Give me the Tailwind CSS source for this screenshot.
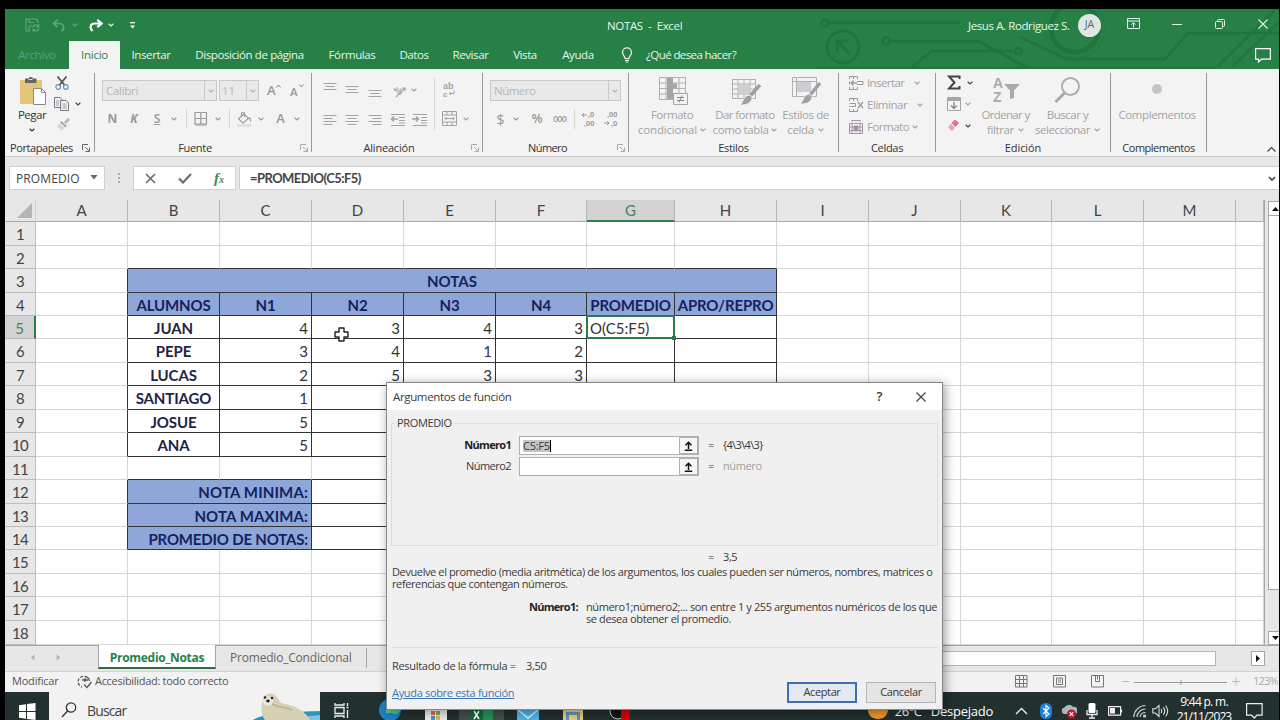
<!DOCTYPE html>
<html lang="es">
  <head>
    <meta charset="UTF-8" />
    <meta name="viewport" content="width=device-width, initial-scale=1.0" />
    <title>NOTAS - Excel</title>
    <script src="https://cdn.jsdelivr.net/npm/@tailwindcss/browser@4"></script>
  </head>
  <body class="relative h-[720px] w-[1280px] overflow-hidden bg-black pt-[9px] pr-px pl-[5px] font-['Open_Sans',sans-serif] text-[11px] text-[#333]">
    <svg class="hidden">
      <symbol id="chev" viewBox="0 0 6 4"><path d="M.6 .8 3 3 5.400 .8" fill="none" stroke="currentColor" stroke-width="1.200" /></symbol>
      <symbol id="launch" viewBox="0 0 8 8"><path d="M.5 6V.5H6M3 3l4 4M7.500 3.500v4h-4" fill="none" stroke="currentColor" /></symbol>
      <symbol id="upload" viewBox="0 0 9 10"><path d="M4.500 8V2M1.500 4.300 4.500 1.300l3 3M.8 9.300h7.400" fill="none" stroke="#111" stroke-width="1.500" /></symbol>
    </svg>

    <div class="flex h-[711px] flex-col">
      <!-- Title bar and tabs -->
      <header class="relative h-[60px] shrink-0 overflow-hidden bg-[#278147] text-[#e4f5ea]">
        <svg class="absolute top-0 right-0" width="464" height="60" viewBox="815 9 464 60" fill="none" stroke="#21743f" stroke-width="2.500">
          <circle cx="825" cy="23" r="3.500" />
          <path d="M829 23H960M890 41H978L1030 69M912 67 932 51H1013M1020 37 1066 59H1165L1188 33H1279M1217 67 1275 10M1232 67 1279 22M812 67l6 1H1216" />
          <circle cx="843" cy="47" r="16" stroke-width="3" />
          <path d="M837 52V41H848M837 41 850 54" stroke-width="3" />
          <circle cx="886" cy="41" r="3.500" />
          <circle cx="1018" cy="51" r="3" />
          <circle cx="1075" cy="28" r="30" stroke-width="1.500" stroke="#247b43" />
          <circle cx="1075" cy="28" r="24" stroke-width="5" />
        </svg>
        <div class="relative flex h-8 items-center">
          <svg class="ml-[20px] text-[#5fa57a]" width="15" height="14" viewBox="0 0 15 14" fill="none" stroke="currentColor" stroke-width="1.200"><path d="M5 13H1V1h10l2 2v2M4 1v3.500h5M4 13V8h3" /><path d="M7.500 9.500a3.200 3.200 0 0 1 6-1M13.700 6v2.700H11M14 10.500a3.200 3.200 0 0 1-5.700 1.200M8 13.500v-2h2" /></svg>
          <svg class="ml-[12px] text-[#5fa57a]" width="14" height="13" viewBox="0 0 14 13" fill="none" stroke="currentColor" stroke-width="1.700"><path d="M5.500 1 1.500 4.500l4 3.500M2 4.500h6a4 4 0 0 1 1.500 7.500" /></svg>
          <svg class="ml-[6px] text-[#5fa57a]" width="6" height="4"><use href="#chev" /></svg>
          <svg class="ml-[11px] text-white" width="14" height="13" viewBox="0 0 14 13" fill="none" stroke="currentColor" stroke-width="2.200"><path d="M8.300 .8l4.200 3.700-4.200 3.700M12.500 4.500H5.500C1 4.500 .5 9.500 3.500 12" /></svg>
          <svg class="ml-[5px]" width="6" height="4"><use href="#chev" /></svg>
          <svg class="ml-[15px] text-white" width="7" height="7" viewBox="0 0 7 7"><path d="M1 .7h5" stroke="currentColor" stroke-width="1.300" /><path d="M1 3.500h5L3.500 6.500z" fill="currentColor" /></svg>
          <span class="mt-px ml-[471px] w-[80px] text-[11.5px] tracking-[-0.35px] whitespace-pre">NOTAS  -  Excel</span>
          <span class="mt-px ml-[281px] w-[103px] text-[11.5px] tracking-[-0.4px] whitespace-nowrap">Jesus A. Rodriguez S.</span>
          <span class="ml-[7px] flex size-[23px] items-center justify-center rounded-full bg-[#dfe6e3] text-[10.5px] text-[#5d6b6b]">JA</span>
          <svg class="mb-[3px] ml-[26px]" width="13" height="11" viewBox="0 0 13 11" fill="none" stroke="currentColor"><path d="M.5 .5h12v10H.5zM.5 3h12M6.500 9.500V5M4.500 6.700l2-2 2 2" /></svg>
          <svg class="mb-[3px] ml-[32px]" width="10" height="10" viewBox="0 0 10 10"><path d="M0 5.500h10" stroke="currentColor" /></svg>
          <svg class="mb-[3px] ml-[33px]" width="10" height="10" viewBox="0 0 10 10" fill="none" stroke="currentColor"><rect x=".5" y="2.500" width="7" height="7" rx="1" /><path d="M2.500 2.500V1.500a1 1 0 0 1 1-1h5a1 1 0 0 1 1 1v5a1 1 0 0 1-1 1h-1" /></svg>
          <svg class="mb-[3px] ml-[33px]" width="10" height="10" viewBox="0 0 10 10"><path d="M.5 .5l9 9M9.500 .5l-9 9" stroke="currentColor" stroke-width="1.100" /></svg>
        </div>
        <nav class="relative flex h-7 items-center text-center text-[11.5px] font-medium tracking-[-0.4px] whitespace-nowrap">
          <span class="w-[64px] text-[#5aa276]">Archivo</span>
          <span class="flex h-7 w-[51px] items-center justify-center bg-[#f3f3f3] tracking-[-0.25px] text-[#2a7f49]">Inicio</span>
          <span class="w-[62px]">Insertar</span>
          <span class="w-[135px]">Disposición de página</span>
          <span class="w-[70px]">Fórmulas</span>
          <span class="w-[54px]">Datos</span>
          <span class="w-[59px]">Revisar</span>
          <span class="w-[50px]">Vista</span>
          <span class="w-[56px]">Ayuda</span>
          <svg class="ml-[15px]" width="12" height="16" viewBox="0 0 12 16" fill="none" stroke="currentColor" stroke-width="1.200"><path d="M4 11.500C4 9 1.500 8.500 1.500 5.300a4.500 4.500 0 0 1 9 0C10.500 8.500 8 9 8 11.500zM4 13.300h4M4.700 15h2.600" /></svg>
          <span class="ml-[13px] tracking-[-0.6px]">¿Qué desea hacer?</span>
          <svg class="mr-[8px] ml-auto" width="16" height="15" viewBox="0 0 16 15" fill="none" stroke="#fff" stroke-width="1.200"><path d="M.6 .6h14.800v10.500H6.500L3.500 14v-2.900H.6z" /></svg>
        </nav>
      </header>

      <!-- Ribbon -->
      <section class="flex h-[88px] shrink-0 border-b border-[#cfcfcf] bg-[#f3f3f3] text-[#a3a3a3]">
        <div class="flex w-[89px] flex-col">
          <div class="flex h-[71px]">
            <div class="flex w-[54px] flex-col items-center pt-2 text-[#333]">
              <svg class="ml-[1px]" width="28" height="29" viewBox="0 0 28 29"><path d="M1 3h22v24H1z" fill="#e5c679" /><path d="M6 1.500h3.500a2.500 2.500 0 0 1 4.500 0h3.500V6h-11.500z" fill="#666" /><path d="M9.500 2.500h4" stroke="#ddd" /><path d="M14.500 11.500h8l4 4v12h-12z" fill="#fff" stroke="#8a8a8a" /><path d="M22.500 11.500v4h4" fill="none" stroke="#8a8a8a" /></svg>
              <span class="mt-px h-[16px] text-[11.5px] leading-[16px] tracking-[-0.5px]">Pegar</span>
              <svg class="mt-[5px]" width="6" height="4"><use href="#chev" /></svg>
            </div>
            <div class="flex w-[35px] flex-col pt-[7px]">
              <svg class="-ml-[4px]" width="14" height="14" viewBox="0 0 14 14" fill="none"><path d="M2.500 .5 9.500 9M11.500 .5 4.500 9" stroke="#555" stroke-width="1.800" /><circle cx="3.200" cy="11" r="2.300" stroke="#6b8fb0" stroke-width="1.200" /><circle cx="10.800" cy="11" r="2.300" stroke="#6b8fb0" stroke-width="1.200" /></svg>
              <div class="mt-[7px] -ml-[5px] flex items-center text-[#444]">
                <svg width="15" height="14" viewBox="0 0 15 14" fill="#f3f3f3" stroke="#777"><path d="M.5 .5h5.500l2 2v8H.5z" /><path d="M2 4h3M2 6h3M2 8h3" stroke="#8aa3ba" /><path d="M6.500 3.500H12l2.500 2.500v7.500h-8z" /><path d="M8.500 7h4M8.500 9h4M8.500 11h4" stroke="#8aa3ba" /></svg>
                <svg class="ml-[6px]" width="6" height="4"><use href="#chev" /></svg>
              </div>
              <svg class="mt-[7px] -ml-[3px]" width="14" height="13" viewBox="0 0 14 13"><path d="M13 1 9 5" stroke="#b9b9b9" stroke-width="3" /><path d="m5.500 3 5.500 5-1.500 1.500-5.500-5z" fill="#aaa" /><path d="M4 5.500 8.500 10 6 12.500.5 8.500z" fill="#d5d5d5" /></svg>
            </div>
          </div>
          <div class="flex h-[16px] items-center justify-between pr-[4px] pl-[5px] tracking-[-0.4px] text-[#333]">Portapapeles<svg width="8" height="8" class="text-[#666]"><use href="#launch" /></svg></div>
        </div>
        <div class="mt-1 h-[79px] w-px bg-[#999]"></div>

        <div class="flex w-[216px] flex-col">
          <div class="h-[71px] pt-[11px]">
            <div class="flex h-[21px] items-center pl-[7px] text-[11.5px]">
              <div class="flex h-[21px] w-[115px] items-center border border-[#c9c9c9] bg-[#e9e9e9] pl-[3px] tracking-[-0.3px] text-[#b5b5b5]">Calibri<span class="ml-auto flex h-full w-[12px] items-center justify-center border-l border-[#c9c9c9]"><svg width="6" height="4"><use href="#chev" /></svg></span></div>
              <div class="ml-[2px] flex h-[21px] w-[40px] items-center border border-[#c9c9c9] bg-[#e9e9e9] pl-[2px] text-[#b5b5b5]">11<span class="ml-auto flex h-full w-[12px] items-center justify-center border-l border-[#c9c9c9]"><svg width="6" height="4"><use href="#chev" /></svg></span></div>
              <span class="ml-[8px] w-[8px] text-[13px] font-semibold text-[#999]">A</span><svg class="mb-[9px] ml-px" width="5" height="4"><path d="M.5 3.500 2.500 1l2 2.500" fill="none" stroke="#888" /></svg>
              <span class="mt-[2px] ml-[9px] w-[8px] text-[11.5px] font-semibold text-[#999]">A</span><svg class="mb-[9px] ml-px" width="5" height="4"><path d="M.5 .5 2.500 3l2-2.500" fill="none" stroke="#888" /></svg>
            </div>
            <div class="mt-[8px] flex h-[20px] items-center pl-[7px] text-center text-[12px] text-[#999]">
              <span class="w-[21px] font-bold">N</span>
              <span class="w-[22px] font-bold italic">K</span>
              <span class="w-[24px] font-semibold underline">S</span>
              <svg class="mx-[2px]" width="6" height="4"><use href="#chev" /></svg>
              <span class="ml-[7px] h-[20px] w-px bg-[#d5d5d5]"></span>
              <svg class="ml-[7px]" width="14" height="14" viewBox="0 0 14 14" fill="none" stroke="currentColor"><path d="M1 .5h11.500V12H1zM1 6.500h11.500M6.800 .5V12" stroke-width="1.200" /><path d="M1 13h11.500" /></svg>
              <svg class="ml-[7px]" width="6" height="4"><use href="#chev" /></svg>
              <span class="ml-[8px] h-[20px] w-px bg-[#d5d5d5]"></span>
              <svg class="ml-[7px]" width="15" height="15" viewBox="0 0 15 15" fill="none" stroke="currentColor" stroke-width="1.100"><path d="M1.500 7 7 1.800 11.500 6.500 6 11zM4.500 4V1.500a1.500 1.500 0 0 1 3 0V5M12 5.500c1.500 1 1.800 2.500 1.300 4" /><path d="M0 13.500h14" stroke="#ddd" stroke-width="2.500" /></svg>
              <svg class="ml-[6px]" width="6" height="4"><use href="#chev" /></svg>
              <span class="ml-[4px] w-[25px] text-[13px] font-semibold">A</span>
              <svg class="ml-[1px]" width="6" height="4"><use href="#chev" /></svg>
            </div>
          </div>
          <div class="relative flex h-[16px] items-center justify-center pr-[16px] tracking-[-0.3px] text-[#333]">Fuente<svg width="8" height="8" class="absolute right-[3px] text-[#aaa]"><use href="#launch" /></svg></div>
        </div>
        <div class="mt-1 h-[79px] w-px bg-[#999]"></div>

        <div class="flex w-[170px] flex-col">
          <div class="flex h-[71px] pt-[9px]">
            <div class="w-[122px] pl-[11px]">
              <div class="flex h-[24px] items-center">
                <svg class="mb-[7px]" width="14" height="8" viewBox="0 0 14 8" stroke="currentColor"><path d="M.5 .5h13M2.500 3.500h9M.5 6.500h13" /></svg>
                <svg class="ml-[8px]" width="14" height="8" viewBox="0 0 14 8" stroke="currentColor"><path d="M.5 .5h13M2.500 3.500h9M.5 6.500h13" /></svg>
                <svg class="mt-[7px] ml-[9px]" width="14" height="8" viewBox="0 0 14 8" stroke="currentColor"><path d="M.5 .5h13M2.500 3.500h9M.5 6.500h13" /></svg>
                <svg class="ml-[9px] overflow-visible" width="15" height="15" viewBox="0 0 15 15"><text x="1" y="7" transform="rotate(40 2 8)" font-size="8" font-weight="600" fill="currentColor">ab</text><path d="M5 14 14 5M11 5h3v3" fill="none" stroke="currentColor" stroke-width="1.200" /></svg>
                <svg class="ml-[5px]" width="6" height="4"><use href="#chev" /></svg>
              </div>
              <div class="mt-[6px] flex h-[24px] items-center">
                <svg width="14" height="12" viewBox="0 0 14 12" stroke="currentColor"><path d="M.5 1.500h13M.5 4.500h9M.5 7.500h13M.5 10.500h9" /></svg>
                <svg class="ml-[8px]" width="14" height="12" viewBox="0 0 14 12" stroke="currentColor"><path d="M.5 1.500h13M2.500 4.500h9M.5 7.500h13M2.500 10.500h9" /></svg>
                <svg class="ml-[9px]" width="14" height="12" viewBox="0 0 14 12" stroke="currentColor"><path d="M.5 1.500h13M4.500 4.500h9M.5 7.500h13M4.500 10.500h9" /></svg>
                <svg class="ml-[8px]" width="16" height="12" viewBox="0 0 16 12" stroke="currentColor" fill="none"><path d="M1 .5h14M9 3.500h6M9 6.500h6M9 9h6M1 11.500h14" /><path d="M8 5H1M4 2.500 1.500 5 4 7.500" stroke-width="1.500" /></svg>
                <svg class="ml-[6px]" width="16" height="12" viewBox="0 0 16 12" stroke="currentColor" fill="none"><path d="M1 .5h14M9 3.500h6M9 6.500h6M9 9h6M1 11.500h14" /><path d="M0 5h7M4 2.500 6.500 5 4 7.500" stroke-width="1.500" /></svg>
              </div>
            </div>
            <div class="h-[52px] w-px bg-[#d5d5d5]"></div>
            <div class="pl-[7px]">
              <svg class="mt-[4px] overflow-visible font-['Liberation_Sans',sans-serif]" width="14" height="15" viewBox="0 0 14 15" font-weight="700" font-size="9" fill="currentColor"><text x="1" y="6.500">ab</text><text x="1" y="14.500" font-size="8">c</text><path d="M12 8.500v3H7.500M9 10 7.500 11.500 9 13" fill="none" stroke="currentColor" /></svg>
              <div class="mt-[14px] flex items-center"><svg width="15" height="15" viewBox="0 0 15 15" fill="none" stroke="currentColor"><path d="M.5 .5h14v14H.5zM.5 4h14M.5 11h14M5 .5V4M10 .5V4M5 11v3.500M10 11v3.500M3 7.500h9M4.500 6 3 7.500 4.500 9M10.500 6 12 7.500 10.500 9" /></svg><svg class="ml-[6px]" width="6" height="4"><use href="#chev" /></svg></div>
            </div>
          </div>
          <div class="relative flex h-[16px] items-center justify-center pr-[16px] tracking-[-0.2px] text-[#333]">Alineación<svg width="8" height="8" class="absolute right-[3px] text-[#aaa]"><use href="#launch" /></svg></div>
        </div>
        <div class="mt-1 h-[79px] w-px bg-[#999]"></div>

        <div class="flex w-[145px] flex-col">
          <div class="h-[71px] pt-[11px] pl-[7px]">
            <div class="flex h-[21px] w-[131px] items-center border border-[#c9c9c9] bg-[#e9e9e9] pl-[3px] text-[11.5px] tracking-[-0.5px] text-[#b5b5b5]">Número<span class="ml-auto flex h-full w-[12px] items-center justify-center border-l border-[#c9c9c9]"><svg width="6" height="4"><use href="#chev" /></svg></span></div>
            <div class="mt-[8px] flex h-[20px] items-center text-center text-[#999]">
              <span class="w-[21px] text-[14px]">$</span>
              <svg class="ml-[2px]" width="6" height="4"><use href="#chev" /></svg>
              <span class="ml-[6px] w-[24px] text-[13px] font-semibold">%</span>
              <span class="w-[21px] text-[9px] font-semibold tracking-[-0.8px]">000</span>
              <span class="ml-[4px] h-[20px] w-px bg-[#d5d5d5]"></span>
              <svg class="ml-[6px] overflow-visible font-['Liberation_Sans',sans-serif]" width="15" height="14" viewBox="0 0 15 14" fill="currentColor" font-size="7.500" font-weight="700"><text x="7" y="5">,0</text><text x="3" y="14">,00</text><path d="M6 3H1M3 1 1 3l2 2" fill="none" stroke="currentColor" /></svg>
              <svg class="ml-[8px] overflow-visible font-['Liberation_Sans',sans-serif]" width="15" height="14" viewBox="0 0 15 14" fill="currentColor" font-size="7.500" font-weight="700"><text x="3" y="5">,00</text><text x="7" y="14">,0</text><path d="M0 11h5M3 9l2 2-2 2" fill="none" stroke="currentColor" /></svg>
            </div>
          </div>
          <div class="relative flex h-[16px] items-center justify-center pr-[16px] tracking-[-0.6px] text-[#333]">Número<svg width="8" height="8" class="absolute right-[3px] text-[#aaa]"><use href="#launch" /></svg></div>
        </div>
        <div class="mt-1 h-[79px] w-px bg-[#999]"></div>

        <div class="flex w-[209px] flex-col">
          <div class="flex h-[71px] pt-2 pl-[6px] text-center text-[11.5px] leading-[15px] tracking-[-0.4px] whitespace-nowrap">
            <div class="flex w-[74px] flex-col items-center">
              <svg class="ml-[2px]" width="29" height="29" viewBox="0 0 29 29" fill="none" stroke="#b0b0b0"><path d="M.5 .5h26v22H.5zM.5 6h26M.5 11.500h26M.5 17h26M7 .5v22M20 .5v22" /><path d="M8 1h6v21H8zM8 6.500h10v4.500H8z" fill="#a5a5a5" stroke="none" /><path d="M14.500 16.500h14v11h-14z" fill="#f3f3f3" stroke="#a5a5a5" /><path d="M18 20.500h7M18 23.500h7M23 18.500l-3 7" stroke="#888" /></svg>
              <span class="mt-px tracking-[-0.5px]">Formato</span>
              <span class="flex items-center tracking-[-0.2px]">condicional<svg class="ml-[3px]" width="6" height="4"><use href="#chev" /></svg></span>
            </div>
            <div class="flex w-[72px] flex-col items-center">
              <svg class="ml-[2px]" width="29" height="29" viewBox="0 0 29 29" fill="none" stroke="#b0b0b0"><path d="M.5 2.500h23v19H.5zM.5 7h23M.5 12h23M.5 17h23M6 2.500v19M12 2.500v19M18 2.500v19" /><path d="M6.500 7.500h12V17h-12z" fill="#cdcdd2" stroke="none" /><path d="M28 8 18 19" stroke="#a0a0a0" stroke-width="3.500" /><path d="M17 18c3 1 4 3 2 6-3 4-7 4-11 4 3-2 3-9 9-10z" fill="#a0a0a0" stroke="#f3f3f3" /></svg>
              <span class="mt-px tracking-[-0.6px]">Dar formato</span>
              <span class="flex items-center">como tabla<svg class="ml-[3px]" width="6" height="4"><use href="#chev" /></svg></span>
            </div>
            <div class="flex w-[49px] flex-col items-center">
              <svg class="ml-[2px]" width="29" height="29" viewBox="0 0 29 29" fill="none" stroke="#b0b0b0"><path d="M.5 .5h24v19H.5zM.5 4.500h24M4.500 .5v19" /><path d="M5 5h14v10H5z" fill="#cdcdd2" stroke="none" /><path d="M28 6 18 18" stroke="#a0a0a0" stroke-width="3.500" /><path d="M17 17c3 1 4 3 2 6-3 4-7 4-11 4 3-2 3-9 9-10z" fill="#a0a0a0" stroke="#f3f3f3" /></svg>
              <span class="mt-px">Estilos de</span>
              <span class="flex items-center">celda<svg class="ml-[4px]" width="6" height="4"><use href="#chev" /></svg></span>
            </div>
          </div>
          <div class="flex h-[16px] items-center justify-center tracking-[-0.3px] text-[#333]">Estilos</div>
        </div>
        <div class="mt-1 h-[79px] w-px bg-[#999]"></div>

        <div class="flex w-[96px] flex-col">
          <div class="flex h-[71px] flex-col gap-[2px] pt-[4px] pl-[10px] text-[11.5px] tracking-[-0.6px]">
            <div class="flex h-[20px] items-center"><svg width="15" height="14" viewBox="0 0 15 14" fill="none" stroke="#999"><path d="M.5 3V.5h8V3M4.500 .5V3M.5 11v2.500h8V11M4.500 11v2.500M.5 5.500v3M8 5.500h6v3H8" /><path d="M8 7H2M4.500 4.500 2 7l2.500 2.500" stroke-width="1.300" /></svg><span class="ml-[3px]">Insertar</span><svg class="ml-[10px]" width="6" height="4"><use href="#chev" /></svg></div>
            <div class="flex h-[20px] items-center"><svg width="15" height="14" viewBox="0 0 15 14" fill="none" stroke="#999"><path d="M.5 3V.5h8V3M4.500 .5V3M.5 11v2.500h8V11M4.500 11v2.500M.5 5.500h6v3h-6" /><path d="m9 4 5 6M14 4l-5 6" stroke-width="1.300" /></svg><span class="ml-[3px] tracking-[-0.45px]">Eliminar</span><svg class="ml-[10px]" width="6" height="4"><use href="#chev" /></svg></div>
            <div class="flex h-[20px] items-center"><svg width="15" height="14" viewBox="0 0 15 14" fill="none" stroke="#a596a5"><path d="M.5 3.500h13v10H.5zM3 3.500v10M11 3.500v10M3 .5h8M3 0v2M11 0v2M.5 7h13M.5 10.500h13" /><path d="M5 6h4v5H5z" fill="#a596a5" /></svg><span class="ml-[3px] tracking-[-0.5px]">Formato</span><svg class="ml-[3px]" width="6" height="4"><use href="#chev" /></svg></div>
          </div>
          <div class="flex h-[16px] items-center justify-center tracking-[-0.3px] text-[#333]">Celdas</div>
        </div>
        <div class="mt-1 h-[79px] w-px bg-[#999]"></div>

        <div class="flex w-[174px] flex-col">
          <div class="flex h-[71px] pl-[11px]">
            <div class="flex w-[31px] flex-col pt-[6px]">
              <div class="flex items-center text-[#444]"><svg width="14" height="15" viewBox="0 0 14 15" fill="none" stroke="#444" stroke-width="2"><path d="M12.500 4V1.500H2L7.500 7.500 2 13.500h10.500V11" /></svg><svg class="ml-[6px]" width="6" height="4"><use href="#chev" /></svg></div>
              <div class="mt-[7px] flex items-center"><svg width="14" height="14" viewBox="0 0 14 14" fill="none" stroke="#a5a5a5"><path d="M.5 .5h13v13H.5z" /><path d="M1 2.500h12" stroke-width="3" /><path d="M7 5v6.500M4 8.500l3 3 3-3" stroke="#888" stroke-width="1.400" /></svg><svg class="ml-[4px]" width="6" height="4"><use href="#chev" /></svg></div>
              <div class="mt-[8px] flex items-center text-[#444]"><svg width="13" height="13" viewBox="0 0 13 13"><path d="M8 .5 12 4 8.500 8 4.500 4z" fill="#d9738f" /><path d="m3.800 4.800 4 4L5 12 1 8.500z" fill="#e7a5b6" /></svg><svg class="ml-[5px]" width="6" height="4"><use href="#chev" /></svg></div>
            </div>
            <div class="flex w-[55px] flex-col items-center pt-2 text-[11.5px] leading-[15px] tracking-[-0.4px] whitespace-nowrap">
              <svg width="28" height="29" viewBox="0 0 28 29" fill="#aaa" font-weight="700" font-size="14" class="overflow-visible font-['Liberation_Sans',sans-serif]"><text x="1" y="11">A</text><text x="1" y="25">Z</text><path d="M12 7h16l-6 6.500V21l-4 1v-8.500z" /></svg>
              <span class="mt-px tracking-[-0.65px]">Ordenar y</span>
              <span class="flex items-center">filtrar<svg class="ml-[4px]" width="6" height="4"><use href="#chev" /></svg></span>
            </div>
            <div class="flex w-[69px] flex-col items-center pt-2 text-[11.5px] leading-[15px] tracking-[-0.5px] whitespace-nowrap">
              <svg width="27" height="29" viewBox="0 0 27 29" fill="none" stroke="#aaa"><circle cx="16.500" cy="9.500" r="8.500" stroke-width="1.800" /><path d="M10.500 16 1.500 25" stroke-width="3" /></svg>
              <span class="mt-px">Buscar y</span>
              <span class="flex items-center">seleccionar<svg class="ml-[4px]" width="6" height="4"><use href="#chev" /></svg></span>
            </div>
          </div>
          <div class="flex h-[16px] items-center justify-center tracking-[-0.1px] text-[#333]">Edición</div>
        </div>
        <div class="mt-1 h-[79px] w-px bg-[#999]"></div>

        <div class="flex w-[95px] flex-col">
          <div class="flex h-[71px] flex-col items-center pt-[15px] pr-[3px] text-[11.5px] tracking-[-0.4px]">
            <div class="size-[10px] rounded-full bg-[#c4c4c4]"></div>
            <span class="mt-[13px] leading-[15px]">Complementos</span>
          </div>
          <div class="flex h-[16px] items-center justify-center tracking-[-0.5px] text-[#333]">Complementos</div>
        </div>
        <div class="mt-1 h-[79px] w-px bg-[#999]"></div>
        <svg class="mt-auto mr-[3px] mb-[4px] ml-auto" width="9" height="6"><path d="M.5 5.500 4.500 1.500l4 4" fill="none" stroke="#444" stroke-width="1.200" /></svg>
      </section>

      <!-- Formula bar -->
      <section class="flex h-[43px] shrink-0 bg-[#e7e7e7] pt-[9px] pl-[4px]">
        <div class="flex h-6 w-[96px] items-center justify-between border border-[#cfcfcf] bg-white px-[6px] pt-px pr-[6px] text-[12px] tracking-[0.1px] text-[#444]">PROMEDIO<svg width="8" height="5" class="mb-[3px]"><path d="M.5 0h7L4 4.500z" fill="#666" /></svg></div>
        <div class="mt-[7px] ml-[13px] flex flex-col gap-[2px]">
          <span class="h-[2px] w-[2px] bg-[#aaa]"></span><span class="h-[2px] w-[2px] bg-[#aaa]"></span><span class="h-[2px] w-[2px] bg-[#aaa]"></span>
        </div>
        <div class="ml-[13px] flex h-6 w-[103px] items-center border border-[#cfcfcf] bg-white">
          <svg class="ml-[11px]" width="11" height="11" viewBox="0 0 11 11"><path d="m1 1 9 9M10 1l-9 9" stroke="#6e6e6e" stroke-width="1.700" /></svg>
          <svg class="ml-[22px]" width="14" height="11" viewBox="0 0 14 11"><path d="m1 5.500 4 4L13 1" fill="none" stroke="#6e6e6e" stroke-width="2.200" /></svg>
          <span class="ml-[22px] font-['Liberation_Serif',serif] text-[15px] leading-none font-bold text-[#3a8b57] italic">f<span class="text-[10px]">x</span></span>
        </div>
        <div class="ml-[3px] flex h-6 flex-1 items-center border border-r-0 border-[#cfcfcf] bg-white pt-px pl-[10px] font-[Lato,sans-serif] text-[13px] font-bold tracking-[-0.55px] text-[#444]">=PROMEDIO(C5:F5)<svg class="mr-[3px] ml-auto" width="8" height="6"><path d="M1 1l3 3 3-3" fill="none" stroke="#444" stroke-width="1.700" /></svg></div>
      </section>

      <!-- Sheet -->
      <section class="flex h-[445px] shrink-0 bg-[#e7e7e7]">
        <table class="w-[1259px] table-fixed border-separate border-spacing-0 border-r border-[#a5a5a5] bg-white font-[Lato,sans-serif] text-[15px] leading-none text-[#333]">
          <colgroup id="cols"></colgroup>
          <tbody id="sheet"></tbody>
        </table>
        <div class="ml-[3px] flex flex-1 flex-col pt-[1px]">
          <div class="flex h-[15px] items-center justify-center border border-r-0 border-[#a5a5a5] bg-white pl-[2px]"><svg width="7" height="4"><path d="M0 4h7L3.500 0z" fill="#111" /></svg></div>
          <div class="h-[374px] border border-t-0 border-r-0 border-[#a5a5a5] bg-white"></div>
          <div class="mt-auto flex h-[14px] items-center justify-center border border-r-0 border-[#a5a5a5] bg-white pl-[2px]"><svg width="7" height="4"><path d="M0 0h7L3.500 4z" fill="#111" /></svg></div>
        </div>
      </section>

      <!-- Sheet tabs -->
      <section class="flex h-[27px] shrink-0 border-b border-[#d0d0d0] bg-[#e7e7e7] text-[12px]">
        <div class="flex h-[24px] w-[93px] items-center border-t border-[#a5a5a5] pl-[25px]">
          <svg width="5" height="8"><path d="M4.500 .5v6L.5 3.500z" fill="#b5b5b5" /></svg>
          <svg class="ml-[21px]" width="5" height="8"><path d="M.5 .5v6l4-3z" fill="#b5b5b5" /></svg>
        </div>
        <div class="flex h-[24px] w-[118px] items-center justify-center border-x border-b-2 border-[#a5a5a5] border-b-[#2f6b45] bg-white pt-[3px] font-bold tracking-[-0.3px] text-[#2a7f49]">Promedio_Notas</div>
        <div class="flex flex-1 border-t border-[#a5a5a5]">
          <span class="mt-[2px] h-[20px] w-[151px] border-r border-[#a5a5a5] pl-[14px] leading-[20px] tracking-[-0.2px] text-[#666]">Promedio_Condicional</span>
          <div class="mt-[5px] ml-[200px] h-[15px] w-[649px] border border-[#b5b5b5] bg-white"></div>
          <div class="mt-[5px] ml-[35px] flex h-[15px] w-[14px] items-center justify-center border border-[#a5a5a5] bg-white"><svg width="4" height="7"><path d="M0 0v7l4-3.500z" fill="#111" /></svg></div>
        </div>
      </section>

      <!-- Status bar -->
      <section class="flex h-[20px] shrink-0 items-center bg-[#f2f2f2] pb-px text-[#555]">
        <span class="ml-[7px] w-[65px] tracking-[-0.2px]">Modificar</span>
        <svg width="15" height="14" viewBox="0 0 15 14" fill="none" stroke="#555" stroke-width="1.300"><path d="M6 1.300A5.500 5.500 0 0 0 5 12" stroke-dasharray="3 1.500" /><path d="M7.500 1.300A5.500 5.500 0 0 1 12.500 6M5 5h6M8 3v4M7 9.500l3 3L14.500 7" /></svg>
        <span class="ml-[3px] tracking-[-0.3px]">Accesibilidad: todo correcto</span>
        <svg class="ml-auto" width="13" height="13" viewBox="0 0 13 13" fill="none" stroke="#777"><path d="M.5 .5h11.500v11.500H.5zM.5 4.500h11.500M.5 8.500h11.500M4.500 .5v11.500M8.500 .5v11.500" /></svg>
        <svg class="ml-[25px]" width="13" height="13" viewBox="0 0 13 13" fill="none" stroke="#777"><path d="M.5 .5h12v11.500H.5zM3.500 3h6v6.500h-6zM5 5h3M5 7h3" /></svg>
        <svg class="ml-[25px]" width="13" height="13" viewBox="0 0 13 13" fill="none" stroke="#777"><path d="M.5 .5h12v11.500H.5zM4.500 .5v6h4v-6M6.500 .5v4" /></svg>
        <svg class="ml-[17px] text-[#999]" width="120" height="13" viewBox="0 0 120 13" fill="none" stroke="currentColor"><path d="M1 6.500h7M111 6.500h8M115 2.500v8" stroke="#bbb" /><path d="M13 7.500h93M60 5v5" /></svg>
        <span class="ml-[12px] w-[26px] text-[11px] tracking-[-0.8px] text-[#aaa]">123%</span>
      </section>

      <!-- Taskbar -->
      <section class="flex h-[28px] shrink-0 bg-[#22302f] text-white">
        <div class="w-[44px] pt-[11px] pl-[14px]"><svg width="17" height="17" viewBox="0 0 17 17" fill="#fff"><path d="M0 2.300 7 1.300V8H0zM8 1.100 16.500 0v8H8zM0 9h7v6.700L0 14.700zM8 9h8.500v8L8 15.900z" /></svg></div>
        <div class="relative flex w-[271px] bg-[#f2f2f2] pt-[9px] pl-[12px]">
          <svg class="mt-px" width="16" height="16" viewBox="0 0 16 16" fill="none" stroke="#333" stroke-width="1.300"><circle cx="10" cy="5.500" r="4.700" /><path d="M6.500 9 1 15" /></svg>
          <span class="ml-[10px] text-[14px] leading-[20px] tracking-[-0.85px] text-[#444]">Buscar</span>
          <svg class="absolute top-0 right-0" width="70" height="28" viewBox="0 0 70 28"><path d="M3 28C15 20 45 20 70 19v9z" fill="#2e93bd" /><path d="M14 28c14-3 40-3 56-5v5z" fill="#7fc4de" /><path d="M15 28C9 20 11 3 19 1.500 27 1 28 8 31 11c12 2 24 7 29 17z" fill="#d8d0b5" /><path d="M20 10c4 6 14 4 22 8" stroke="#bdb496" stroke-width="2" fill="none" /><ellipse cx="18" cy="9" rx="5" ry="4.500" fill="#efebdc" /><circle cx="15" cy="5.500" r="1.300" fill="#222" /><circle cx="22" cy="6" r="1.300" fill="#222" /><ellipse cx="18" cy="9" rx="1.800" ry="1.400" fill="#222" /></svg>
        </div>
        <svg class="mt-[11px] ml-[14px]" width="16" height="16" viewBox="0 0 16 16" fill="none" stroke="#eee" stroke-width="1.300"><path d="M1 0v2h9V0M1 4.500h9v6H1zM1 15v-2h9v2M13.500 0v3M13.500 7v8M12.500 4.500h2" /></svg>
        <svg class="mt-[7px] ml-[28px]" width="24" height="21" viewBox="0 0 24 21"><circle cx="12" cy="11" r="11" fill="#1d83c4" /><path d="M8 14a7 7 0 0 1 14-3c0 4-6 5-8 3z" fill="#5cc08a" /></svg>
        <svg class="mt-[15px] ml-[23px]" width="22" height="13" viewBox="0 0 22 13"><path d="M0 0h22v13H0z" fill="#e9ecec" /><path d="M6 4h4v4H6z" fill="#d96c4a" /><path d="M11 4h4v4h-4z" fill="#7cab4f" /><path d="M6 9h4v4H6z" fill="#4a90c9" /><path d="M11 9h4v4h-4z" fill="#e5b547" /></svg>
        <div class="ml-[12px] flex w-[45px] items-end justify-center bg-[#3f4f4c]"><svg width="22" height="14" viewBox="0 0 22 14"><path d="M6 0h16v14H6z" fill="#23935a" /><path d="M0 2h12v12H0z" fill="#12683a" /><path d="m3 5 5 8M8 5l-5 8" stroke="#fff" stroke-width="1.600" /></svg></div>
        <svg class="mt-[16px] ml-[13px]" width="22" height="12" viewBox="0 0 22 12"><path d="M0 0h22v12H0z" fill="#4db4e4" /><path d="m0 1 11 9 11-9" fill="none" stroke="#d5eef9" stroke-width="1.500" /></svg>
        <svg class="mt-[16px] ml-[24px]" width="20" height="12" viewBox="0 0 20 12"><path d="M0 0h20v12H0z" fill="#e9ce7b" /><path d="M3 4h14v8H3z" fill="#5d97b8" /><path d="M6 7h8v5H6z" fill="#e9ce7b" /></svg>
        <svg class="mt-[14px] ml-[26px]" width="22" height="14" viewBox="0 0 22 14"><circle cx="9" cy="5" r="8" fill="#141414" stroke="#ccc" /><path d="M12 4h9v10h-9z" fill="#d8000c" /></svg>
        <svg class="mt-[10px] ml-auto" width="22" height="18" viewBox="0 0 22 18"><path d="M13 0c2 5-3 9-12 8 0 5 4 9 10 9s10-4 10-10c0-3-3-6-8-7z" fill="#f09a2a" /></svg>
        <span class="mt-[9px] ml-[6px] w-[36px] text-[13px] leading-[20px] tracking-[-0.5px]">26°C</span>
        <span class="mt-[9px] text-[13px] leading-[20px] tracking-[-0.25px]">Despejado</span>
        <svg class="mt-[15px] ml-[22px]" width="13" height="8"><path d="M1 7l5.500-5.500L12 7" fill="none" stroke="#eee" stroke-width="1.400" /></svg>
        <svg class="mt-[11px] ml-[12px]" width="12" height="16" viewBox="0 0 12 16"><rect width="12" height="16" rx="5.500" fill="#1b7fd8" /><path d="M3 5l6 6-3 2.500v-11L9 5l-6 6" fill="none" stroke="#fff" stroke-width="1.100" /></svg>
        <svg class="mt-[12px] ml-[9px]" width="16" height="15" viewBox="0 0 16 15"><path d="M3.500 10a3.300 3.300 0 0 1 0-6.500A5 5 0 0 1 12 3a3.500 3.500 0 0 1 2 7z" fill="#aeb7b7" /><circle cx="10.500" cy="10" r="4.500" fill="#c8102e" /><path d="m8.700 8.200 3.600 3.600M12.300 8.200l-3.600 3.600" stroke="#fff" stroke-width="1.200" /></svg>
        <svg class="mt-[11px] ml-[9px]" width="12" height="16" viewBox="0 0 12 16"><rect x="2.500" width="7" height="10" rx="1.500" fill="#fff" /><path d="M1 7v4.500h10V7M6 11v4M3 15h6" fill="none" stroke="#eee" stroke-width="1.300" /></svg>
        <svg class="mt-[14px] ml-[10px]" width="15" height="10" viewBox="0 0 15 10"><path d="M.6 .6h12v8.500H.6zM13.500 3.500v3" fill="none" stroke="#eee" stroke-width="1.200" /><path d="M2 2h5v5.500H2z" fill="#eee" /></svg>
        <svg class="mt-[12px] ml-[10px]" width="13" height="14" viewBox="0 0 13 14" fill="none" stroke="#ccc" stroke-width="1.200"><path d="M.8 13A12 12 0 0 1 12.500 1.500M4 13a8.500 8.500 0 0 1 8.500-8M7 13a5.500 5.500 0 0 1 5.500-4.500" /><circle cx="11.500" cy="12" r="1" fill="#ccc" /></svg>
        <svg class="mt-[12px] ml-[6px]" width="17" height="14" viewBox="0 0 17 14" fill="none" stroke="#ddd" stroke-width="1.100"><path d="M.8 4.800h2.500L7 1.500v11L3.300 9H.8zM9 5q1.500 2 0 4M11.300 3.300q3 3.700 0 7.400M13.500 1.500q4.500 5.500 0 11" /></svg>
        <div class="ml-[7px] w-[56px] pt-[2px] text-center text-[12px] leading-[15px] tracking-[-0.7px] whitespace-nowrap"><div>9:44 p. m.</div><div class="tracking-[-0.9px]">21/11/2023</div></div>
        <svg class="mt-[11px] mr-[16px] ml-[14px]" width="17" height="16" viewBox="0 0 17 16" fill="none" stroke="#eee" stroke-width="1.200"><path d="M.6 .6h15.500v11.500H11L8.300 15 5.600 12.100H.6z" /></svg>
      </section>
    </div>

    <!-- Mouse pointer -->
    <svg class="absolute top-[327px] left-[334px]" width="15" height="15" viewBox="0 0 15 15"><path d="M5 1h5v4h4v5h-4v4H5v-4H1V5h4z" fill="#fff" stroke="#222" stroke-width="1.400" stroke-linejoin="round" /></svg>

    <!-- Function arguments dialog -->
    <div class="absolute top-[382px] left-[386px] flex h-[328px] w-[557px] flex-col border border-[#888] bg-[#f0f0f0] tracking-[-0.39px] text-[#3a3a3a] shadow-[2px_2px_10px_rgba(0,0,0,0.4)]">
      <div class="flex h-[27px] shrink-0 items-center bg-white pl-[6px]">
        <span class="text-[11.5px] tracking-[-0.35px]">Argumentos de función</span>
        <span class="ml-auto text-[13px] font-semibold">?</span>
        <svg class="mr-[16px] ml-[34px]" width="10" height="10" viewBox="0 0 10 10"><path d="m.5 .5 9 9M9.500 .5l-9 9" stroke="#444" stroke-width="1.200" /></svg>
      </div>
      <fieldset class="mx-[4px] mt-[4px] h-[132px] shrink-0 border border-[#dedede]">
        <legend class="ml-[3px] px-[2px] leading-[18px] tracking-[-0.35px]">PROMEDIO</legend>
        <div class="mt-[4px] flex h-[19px] items-center">
          <b class="w-[119px] text-right tracking-[-0.7px] text-[#222]">Número1</b>
          <div class="ml-[8px] flex h-[19px] w-[180px] items-center border border-[#b0b0b0] bg-white pl-[3px]">
            <span class="border-r border-black bg-[#c4c4c4] leading-[12px] tracking-[-0.25px]">C5:F5</span>
            <span class="ml-auto flex h-full w-[19px] items-center justify-center border border-[#b0b0b0] bg-[#f6f6f6]"><svg width="9" height="10"><use href="#upload" /></svg></span>
          </div>
          <span class="ml-[9px] w-[15px]">=</span><span class="tracking-[-0.65px]">{4\3\4\3}</span>
        </div>
        <div class="mt-[2px] flex h-[19px] items-center">
          <span class="w-[119px] text-right tracking-[-0.55px]">Número2</span>
          <div class="ml-[8px] flex h-[19px] w-[180px] items-center border border-[#b0b0b0] bg-white">
            <span class="ml-auto flex h-full w-[19px] items-center justify-center border border-[#b0b0b0] bg-[#f6f6f6]"><svg width="9" height="10"><use href="#upload" /></svg></span>
          </div>
          <span class="ml-[9px] w-[15px]">=</span><span class="font-medium text-[#a0a0a0]">número</span>
        </div>
      </fieldset>
      <div class="mt-[3px] flex h-[16px] items-center pl-[321px]"><span class="w-[15px]">=</span>3,5</div>
      <p class="mt-px pl-[5px] leading-[12px] whitespace-nowrap">Devuelve el promedio (media aritmética) de los argumentos, los cuales pueden ser números, nombres, matrices o<br />referencias que contengan números.</p>
      <div class="mt-[11px] flex leading-[12px] whitespace-nowrap">
        <b class="w-[191px] text-right tracking-[-0.7px] text-[#222]">Número1:</b>
        <p class="ml-[8px]">número1;número2;... son entre 1 y 255 argumentos numéricos de los que<br />se desea obtener el promedio.</p>
      </div>
      <div class="mx-[5px] mt-[22px] h-px bg-[#dcdcdc]"></div>
      <div class="mt-[10px] flex h-[16px] items-center pl-[5px] tracking-[-0.3px]"><span class="w-[134px]">Resultado de la fórmula =</span>3,50</div>
      <div class="mt-[8px] flex h-[21px] items-center pr-[6px] pl-[5px]">
        <a class="mt-px tracking-[-0.32px] text-[#3a76b8] underline">Ayuda sobre esta función</a>
        <button class="ml-auto h-[21px] w-[70px] border-2 border-[#3f6fae] bg-[#e3e9f1]">Aceptar</button>
        <button class="ml-[9px] h-[21px] w-[70px] border border-[#b5b5b5] bg-[#e4e4e4]">Cancelar</button>
      </div>
    </div>

    <script>
      const colWidths = [31, 92, 92, 92, 92, 92, 91, 88, 102, 92, 92, 91, 92, 92, 28];
      const rowHeights = [24, 23, 24, 23, 23, 24, 23, 24, 23, 24, 23, 24, 23, 23, 24, 23, 24, 24];
      const letters = ["A", "B", "C", "D", "E", "F", "G", "H", "I", "J", "K", "L", "M", ""];
      const heads = ["ALUMNOS", "N1", "N2", "N3", "N4", "PROMEDIO", "APRO/REPRO"];
      const students = [
        ["JUAN", 4, 3, 4, 3, "O(C5:F5)"],
        ["PEPE", 3, 4, 1, 2],
        ["LUCAS", 2, 5, 3, 3],
        ["SANTIAGO", 1],
        ["JOSUE", 5],
        ["ANA", 5],
      ];
      const totals = {
        12: ["NOTA MINIMA:", "tracking-[0.15px]"],
        13: ["NOTA MAXIMA:", "tracking-[0.1px]"],
        14: ["PROMEDIO DE NOTAS:", "tracking-[-0.18px]"],
      };

      const light = "border-r border-b border-[#d6d6d6] p-0";
      const dark = "border-r border-b border-[#333] p-0 pt-[2px]";
      const head = dark + " bg-[#8ea6d8] text-center font-bold text-[#13235f]";

      document.getElementById("cols").innerHTML = colWidths
        .map((w) => `<col style="width:${w}px">`)
        .join("");

      let html = `<tr style="height:22px"><td class="border-r border-b border-[#a8a8a8] border-r-[#cfcfcf] bg-[#e7e7e7] p-0"><svg class="ml-auto mr-[3px]" width="15" height="15"><path d="M15 0v15H0z" fill="#b5b5b5" /></svg></td>`;
      letters.forEach((l) => {
        html += l === "G"
          ? `<td class="border-r border-b-2 border-[#2f7d4c] border-r-[#b5b5b5] bg-[#d2d2d2] p-0 pt-px text-center text-[#4b7d60]">G</td>`
          : `<td class="border-r border-b border-[#a8a8a8] border-r-[#b5b5b5] bg-[#e7e7e7] p-0 text-center text-[#444]">${l}</td>`;
      });
      html += "</tr>";

      function cell(r, c) {
        // c: 1 = A ... 14 = N
        if (r === 3 && c === 2) return `<td colspan="7" class="${head}">NOTAS</td>`;
        if (r === 3 && c > 2 && c < 9) return "";
        if (r === 4 && c > 1 && c < 9) return `<td class="${head} whitespace-nowrap tracking-[-0.15px]">${heads[c - 2]}</td>`;
        if (r > 4 && r < 11 && c > 1 && c < 9) {
          const v = students[r - 5][c - 2] ?? "";
          if (c === 2) return `<td class="${dark} text-center font-bold tracking-[-0.1px] text-[#1f2347]">${v}</td>`;
          if (r === 5 && c === 7)
            return `<td class="${dark} relative pl-[3px] text-left">${v}<div class="absolute -top-px -right-px -bottom-px -left-px border-2 border-[#2b7a48]"></div><div class="absolute -right-[2px] -bottom-[2px] size-[4px] bg-[#2b7a48]"></div></td>`;
          return `<td class="${dark} text-right"><span class="pr-[3px]">${v}</span></td>`;
        }
        if (totals[r]) {
          const [label, tracking] = totals[r];
          if (c === 2) return `<td colspan="2" class="${dark} ${tracking} bg-[#8ea6d8] text-right font-bold text-[#13235f]"><span class="pr-[3px]">${label}</span></td>`;
          if (c === 3) return "";
          if (c === 4) return `<td class="${dark}"></td>`;
        }
        // plain cells next to a bordered block carry its outer edge
        if (c === 1 && ((r > 2 && r < 11) || totals[r])) return `<td class="border-r border-b border-[#d6d6d6] border-r-[#333] p-0"></td>`;
        if ((r === 2 && c > 1 && c < 9) || (r === 11 && c > 1 && c < 5)) return `<td class="border-r border-b border-[#d6d6d6] border-b-[#333] p-0"></td>`;
        return `<td class="${light}"></td>`;
      }

      rowHeights.forEach((h, i) => {
        const r = i + 1;
        html += `<tr style="height:${h}px">`;
        html += r === 5
          ? `<td class="border-r-2 border-b border-[#b5b5b5] border-r-[#2b7a48] bg-[#d2d2d2] p-0 pt-[2px] text-center text-[#3f8a5a]">5</td>`
          : `<td class="border-r border-b border-[#bdbdbd] bg-[#e7e7e7] p-0 pt-[2px] text-center tracking-[-0.7px] text-[#444]">${r}</td>`;
        for (let c = 1; c < 15; c++) html += cell(r, c);
        html += "</tr>";
      });
      document.getElementById("sheet").innerHTML = html;
    </script>
  </body>
</html>
